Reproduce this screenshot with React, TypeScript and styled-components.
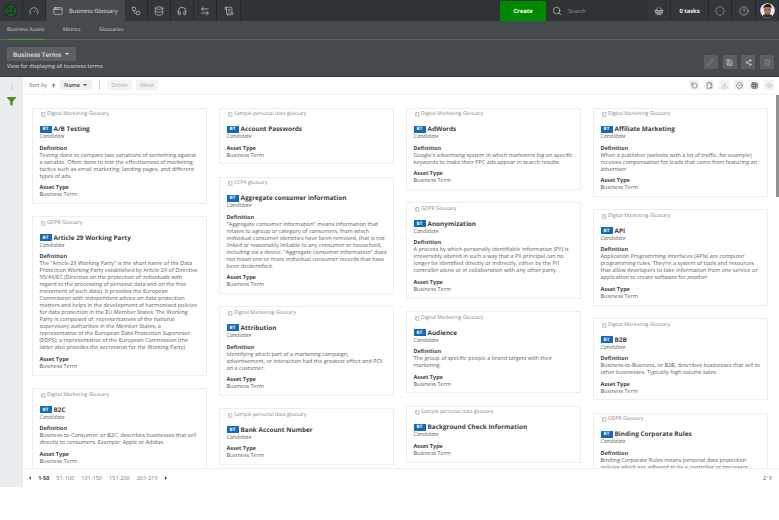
import React from "react";
import styled, { createGlobalStyle } from "styled-components";
import {
  Gauge, AppWindow, Database, Headphones, ArrowLeftRight, ScrollText, Search, ShoppingBasket,
  CircleDashed, CircleHelp, Pencil, Save, Share2, Trash2, ChevronRight, RotateCcw, FilePlus2,
  Download, CircleDot, Grid3x3, Eye, Workflow, ArrowUp, Notebook,
} from "lucide-react";

const Global = createGlobalStyle`
  html, body { margin: 0; padding: 0; background: #fff; }
  * { box-sizing: border-box; }
  body { font-family: "Open Sans", "Liberation Sans", sans-serif; text-rendering: geometricPrecision; }
`;

const Page = styled.div`
  width: 779px; height: 487px; display: flex; flex-direction: column; overflow: hidden; position: relative;
`;
const TopBar = styled.header`
  height: 21px; flex: none; background: #2f3336; display: flex; align-items: stretch;
`;
const NavCell = styled.div<{ $w?: number }>`
  width: ${(p) => p.$w ?? 23}px; flex: none; display: flex; align-items: center; justify-content: center;
  border-right: 1px solid #26292b; background: #33373a; color: #d5d7d8;
`;
const ActiveTab = styled.div`
  width: 79px; flex: none; display: flex; align-items: center; gap: 6px; padding-left: 7px;
  background: #454a4e; color: #dfe1e2; font-size: 5.8px;
`;
const Spacer = styled.div`flex: 1;`;
const CreateButton = styled.div`
  width: 46px; margin-top: 1px; background: #008a00; color: #fff; font-size: 5.8px; font-weight: 700;
  display: flex; align-items: center; justify-content: center;
`;
const SearchBox = styled.div`
  width: 101px; display: flex; align-items: center; gap: 6px; padding-left: 6px; color: #8f9496; font-size: 5.6px;
  svg { color: #d5d7d8; }
`;
const TasksCell = styled(NavCell)`
  color: #e8e9ea; font-size: 5.8px; font-weight: 700;
`;
const SubNav = styled.nav`
  height: 19px; flex: none; background: #454a4e; border-bottom: 1px solid #5b6063; display: flex; padding-left: 7px; gap: 18.5px;
`;
const SubTab = styled.div<{ $active?: boolean }>`
  height: 19px; display: flex; align-items: center; font-size: 5.1px; color: #cfd2d3; padding-bottom: 1px;
  border-bottom: 1.5px solid ${(p) => (p.$active ? "#4f9a2a" : "transparent")};
`;
const Header = styled.div`
  height: 37px; flex: none; background: #454a4e; border-bottom: 1px solid #383c3f; padding: 7px 5px 0 7px; position: relative;
  display: flex; justify-content: space-between;
`;
const ViewSelect = styled.div`
  width: 69px; height: 14px; background: #5b6063; color: #e4e6e7; font-size: 6.4px; font-weight: 600;
  display: flex; align-items: center; padding-left: 6px; gap: 4px;
`;
const DownCaret = styled.span<{ $color: string }>`
  width: 0; height: 0; border-left: 2.2px solid transparent; border-right: 2.2px solid transparent;
  border-top: 2.4px solid ${(p) => p.$color};
`;
const ViewText = styled.div`
  font-size: 5.5px; line-height: 7px; color: #dcdedf; margin-top: 2px;
`;
const HeaderActions = styled.div`
  display: flex; gap: 4.7px; padding-top: 8px;
`;
const ActionButton = styled.div<{ $bright?: boolean }>`
  width: 14px; height: 14px; background: #5b6063; color: ${(p) => (p.$bright ? "#e0e2e3" : "#8c9092")};
  display: flex; align-items: center; justify-content: center;
`;
const Body = styled.div`
  flex: 1; display: flex; min-height: 0;
`;
const Side = styled.aside`
  width: 23px; flex: none; background: #e9edf0; display: flex; flex-direction: column; align-items: center; padding-top: 6px; gap: 5px; color: #7fb35a;
`;
const Main = styled.main`
  flex: 1; display: flex; flex-direction: column; min-width: 0; position: relative;
`;
const Toolbar = styled.div`
  height: 18px; flex: none; border-bottom: 1px solid #f2f2f2; display: flex; align-items: center; padding: 0 5px 1px 6px; font-size: 5.5px; color: #666;
`;
const SortLabel = styled.span`margin-right: 4px;`;
const NameSelect = styled.div`
  width: 32px; height: 10px; background: #eef1f3; color: #444; font-weight: 600; display: flex; align-items: center; padding-left: 4px; gap: 3px; margin-left: 4px;
`;
const Divider = styled.div`
  width: 1px; height: 10px; background: #ccc; margin: 0 7px;
`;
const GhostButton = styled.div<{ $w: number }>`
  width: ${(p) => p.$w}px; height: 10px; background: #f1f3f4; color: #aaa; display: flex; align-items: center; justify-content: center; margin-right: 4px;
`;
const ToolIcons = styled.div`
  margin-left: auto; display: flex; gap: 5px;
`;
const ToolIcon = styled.div<{ $faint?: boolean }>`
  width: 10px; height: 10px; background: #f0f2f3; color: ${(p) => (p.$faint ? "#b5b8ba" : "#555")};
  display: flex; align-items: center; justify-content: center;
`;
const Grid = styled.div`
  flex: 1; min-height: 0; overflow: hidden; display: flex; gap: 12px; padding: 12.5px 0 0 9px;
`;
const Column = styled.div`
  width: 175px; flex: none; display: flex; flex-direction: column; gap: 12.5px;
`;
const Card = styled.article`
  border: 1px solid #eeeeee; padding: 2.5px 6.5px 4.6px 6.5px; flex: none; background: #fff;
`;
const Glossary = styled.div`
  display: flex; align-items: center; gap: 1.5px; font-size: 5.1px; line-height: 7px; color: #808487; padding-left: 1px; height: 7px; margin-bottom: 7px;
`;
const TitleRow = styled.div`
  display: flex; align-items: center; gap: 2px; height: 8px;
`;
const Badge = styled.span`
  width: 12px; height: 7px; background: #0f6cbd; color: #fff; font-size: 4.6px; font-weight: 700; display: flex; align-items: center; justify-content: center; letter-spacing: .2px;
`;
const Title = styled.h3`
  margin: 0; font-size: 6.4px; font-weight: 700; color: #3b4045; line-height: 8px; white-space: nowrap;
`;
const Status = styled.div`
  font-size: 5.5px; line-height: 7px; font-style: italic; color: #666;
`;
const FieldLabel = styled.div`
  font-size: 5.5px; line-height: 7px; font-weight: 700; color: #3f4448; margin-top: 4.6px;
`;
const FieldText = styled.div`
  font-size: 5.5px; line-height: 7px; color: #5c6065;
`;
const Footer = styled.footer`
  height: 19px; flex: none; border-top: 1px solid #eeeeee; background: #fff; display: flex; align-items: center; padding: 0 7px 0 6px; font-size: 5.5px; color: #777; gap: 7.2px;
`;
const PageLink = styled.span<{ $current?: boolean }>`
  font-weight: ${(p) => (p.$current ? 700 : 400)}; color: ${(p) => (p.$current ? "#444" : "#777")};
`;
const Caret = styled.span<{ $dir: "l" | "r" }>`
  width: 0; height: 0; border-top: 2px solid transparent; border-bottom: 2px solid transparent;
  ${(p) => (p.$dir === "l" ? "border-right: 2.5px solid #444;" : "border-left: 2.5px solid #444;")}
`;
const Total = styled.span`margin-left: auto; color: #555;`;
const Scrollbar = styled.div`
  position: absolute; right: 0; top: 18px; width: 3px; height: 102px; background: #8f9294;
`;

const DML = "Digital Marketing Glossary";
const GDPR = "GDPR Glossary";
const SP = "Sample personal data glossary";

type Item = { g: string; t: string; d?: string };
const columns: Item[][] = [
  [
    { g: DML, t: "A/B Testing", d: "Testing done to compare two variations of something against a variable. Often done to test the effectiveness of marketing tactics such as email marketing, landing pages, and different types of ads." },
    { g: GDPR, t: "Article 29 Working Party", d: "The \"Article 29 Working Party\" is the short name of the Data Protection Working Party established by Article 29 of Directive 95/46/EC (Directive on the protection of individuals with regard to the processing of personal data and on the free movement of such data). It provides the European Commission with independent advice on data protection matters and helps in the development of harmonised policies for data protection in the EU Member States. The Working Party is composed of: representatives of the national supervisory authorities in the Member States; a representative of the European Data Protection Supervisor (EDPS); a representative of the European Commission (the latter also provides the secretariat for the Working Party)." },
    { g: DML, t: "B2C", d: "Business-to-Consumer, or B2C, describes businesses that sell directly to consumers. Example: Apple or Adidas." },
  ],
  [
    { g: SP, t: "Account Passwords" },
    { g: "CCPA glossary", t: "Aggregate consumer information", d: "\"Aggregate consumer information\" means information that relates to agroup or category of consumers, from which individual consumer identities have been removed, that is not linked or reasonably linkable to any consumer or household, including via a device. \"Aggregate consumer information\" does not mean one or more individual consumer records that have been deidentified." },
    { g: DML, t: "Attribution", d: "Identifying which part of a marketing campaign, advertisement, or interaction had the greatest effect and ROI on a customer." },
    { g: SP, t: "Bank Account Number" },
  ],
  [
    { g: DML, t: "AdWords", d: "Google's advertising system in which marketers big on specific keywords to make their PPC ads appear in search results." },
    { g: GDPR, t: "Anonymization", d: "A process by which personally identifiable information (PII) is irreversibly altered in such a way that a PII principal can no longer be identified directly or indirectly, either by the PII controller alone or in collaboration with any other party." },
    { g: DML, t: "Audience", d: "The group of specific people a brand targets with their marketing." },
    { g: SP, t: "Background Check Information" },
  ],
  [
    { g: DML, t: "Affiliate Marketing", d: "When a publisher (website with a lot of traffic, for example) receives compensation for leads that come from featuring an advertiser." },
    { g: DML, t: "API", d: "Application Programming Interfaces (APIs) are computer programming rules. They're a system of tools and resources that allow developers to take information from one service or application to create software for another" },
    { g: DML, t: "B2B", d: "Business-to-Business, or B2B, describes businesses that sell to other businesses. Typically high volume sales." },
    { g: GDPR, t: "Binding Corporate Rules", d: "Binding Corporate Rules means personal data protection policies which are adhered to by a controller or processor established in the EU for transfers of personal data." },
  ],
];

const Logo = () => (
  <svg width="14" height="14" viewBox="0 0 28 28">
    <circle cx="14" cy="14" r="13" fill="#16331f" />
    <g stroke="#3f9a3a" strokeWidth="2" fill="none">
      <circle cx="14" cy="14" r="9" strokeDasharray="3 2.5" />
      <path d="M14 3v22M3 14h22" strokeDasharray="2.5 2.5" />
    </g>
  </svg>
);

const Avatar = () => (
  <svg width="15" height="15" viewBox="0 0 30 30">
    <defs><clipPath id="av"><circle cx="15" cy="15" r="14.5" /></clipPath></defs>
    <g clipPath="url(#av)">
      <rect width="30" height="30" fill="#e8e8e6" />
      <path d="M3 30c1-6 6-8 12-8s11 2 12 8z" fill="#2b2b2e" />
      <ellipse cx="15" cy="14" rx="7" ry="9" fill="#a9745a" />
      <path d="M7 12c-1-7 4-10 9-10s8 4 7 10c-1-3-3-4-8-4s-7 1-8 4z" fill="#2a1d18" />
      <path d="M10 18c2 6 8 6 10 0l-1 5h-8z" fill="#4a3229" />
      <rect x="10" y="12" width="3" height="1.2" fill="#2a1d18" />
      <rect x="17" y="12" width="3" height="1.2" fill="#2a1d18" />
    </g>
  </svg>
);

const FilterSolid = () => (
  <svg width="11" height="11" viewBox="0 0 22 22"><path d="M1 2h20l-7.5 9v9L8.5 17v-6z" fill="#4f8f1d" /></svg>
);

const App = () => (
  <>
    <Global />
    <Page>
      <TopBar>
        <NavCell><Logo /></NavCell>
        <NavCell><Gauge size={10} strokeWidth={1.4} /></NavCell>
        <ActiveTab><AppWindow size={10} strokeWidth={1.4} />Business Glossary</ActiveTab>
        <NavCell><Workflow size={10} strokeWidth={1.4} /></NavCell>
        <NavCell><Database size={10} strokeWidth={1.4} /></NavCell>
        <NavCell><Headphones size={10} strokeWidth={1.6} /></NavCell>
        <NavCell><ArrowLeftRight size={10} strokeWidth={1.6} /></NavCell>
        <NavCell $w={24}><ScrollText size={10} strokeWidth={1.4} /></NavCell>
        <Spacer />
        <CreateButton>Create</CreateButton>
        <SearchBox><Search size={10} strokeWidth={1.5} />Search</SearchBox>
        <NavCell $w={24}><ShoppingBasket size={10} strokeWidth={1.5} /></NavCell>
        <TasksCell $w={38}>0 tasks</TasksCell>
        <NavCell><CircleDashed size={10} strokeWidth={1.5} /></NavCell>
        <NavCell $w={24}><CircleHelp size={10} strokeWidth={1.3} /></NavCell>
        <NavCell $w={23}><Avatar /></NavCell>
      </TopBar>
      <SubNav>
        <SubTab $active>Business Assets</SubTab>
        <SubTab>Metrics</SubTab>
        <SubTab>Glossaries</SubTab>
      </SubNav>
      <Header>
        <div>
          <ViewSelect>Business Terms <DownCaret $color="#e4e6e7" /></ViewSelect>
          <ViewText>View for displaying all business terms</ViewText>
        </div>
        <HeaderActions>
          <ActionButton><Pencil size={7} /></ActionButton>
          <ActionButton $bright><Save size={7} /></ActionButton>
          <ActionButton $bright><Share2 size={7} /></ActionButton>
          <ActionButton><Trash2 size={7} /></ActionButton>
        </HeaderActions>
      </Header>
      <Body>
        <Side>
          <ChevronRight size={8} strokeWidth={1.6} />
          <FilterSolid />
        </Side>
        <Main>
          <Toolbar>
            <SortLabel>Sort by</SortLabel>
            <ArrowUp size={5} strokeWidth={3} color="#333" />
            <NameSelect>Name <DownCaret $color="#444" /></NameSelect>
            <Divider />
            <GhostButton $w={25}>Delete</GhostButton>
            <GhostButton $w={22}>Move</GhostButton>
            <ToolIcons>
              <ToolIcon><RotateCcw size={7} /></ToolIcon>
              <ToolIcon><FilePlus2 size={7} /></ToolIcon>
              <ToolIcon $faint><Download size={7} /></ToolIcon>
              <ToolIcon><CircleDot size={7} /></ToolIcon>
              <ToolIcon><Grid3x3 size={7} strokeWidth={2.6} /></ToolIcon>
              <ToolIcon $faint><Eye size={7} /></ToolIcon>
            </ToolIcons>
          </Toolbar>
          <Grid>
            {columns.map((col, i) => (
              <Column key={i}>
                {col.map((c) => (
                  <Card key={c.t}>
                    <Glossary><Notebook size={5} strokeWidth={1.5} />{c.g}</Glossary>
                    <TitleRow><Badge>BT</Badge><Title>{c.t}</Title></TitleRow>
                    <Status>Candidate</Status>
                    {c.d && (<><FieldLabel>Definition</FieldLabel><FieldText>{c.d}</FieldText></>)}
                    <FieldLabel>Asset Type</FieldLabel>
                    <FieldText>Business Term</FieldText>
                  </Card>
                ))}
              </Column>
            ))}
          </Grid>
          <Scrollbar />
          <Footer>
            <Caret $dir="l" />
            <PageLink $current>1-50</PageLink>
            <PageLink>51-100</PageLink>
            <PageLink>101-150</PageLink>
            <PageLink>151-200</PageLink>
            <PageLink>201-219</PageLink>
            <Caret $dir="r" />
            <Total>2' 9</Total>
          </Footer>
        </Main>
      </Body>
    </Page>
  </>
);

export default App;
